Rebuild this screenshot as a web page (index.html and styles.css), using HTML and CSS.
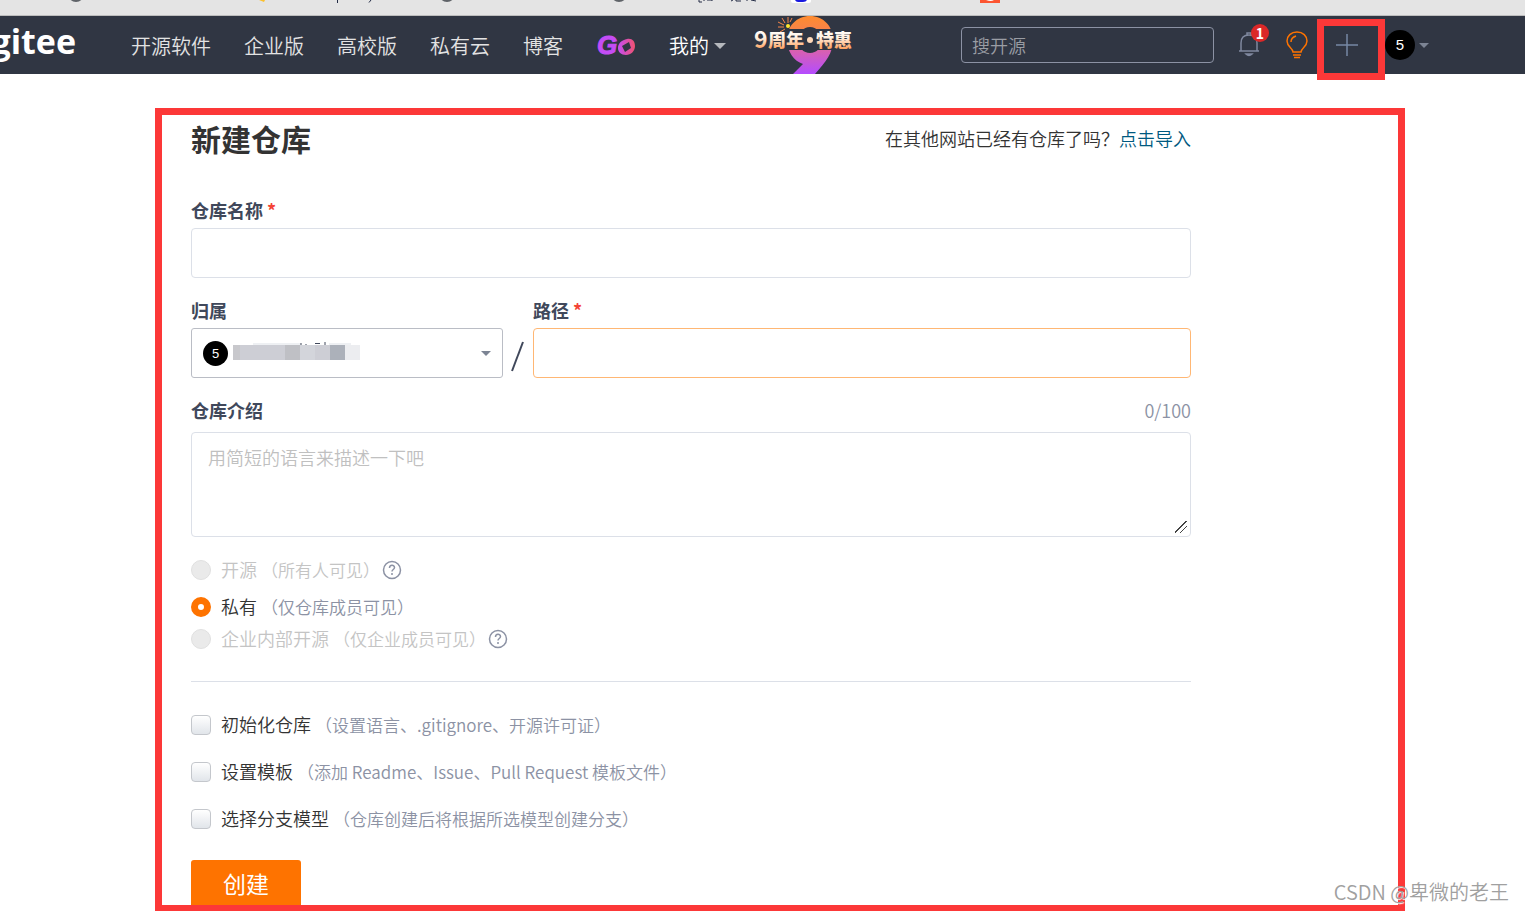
FILE: index.html
```html
<!DOCTYPE html>
<html lang="zh-CN">
<head>
    <meta charset="utf-8">
    <title>新建仓库 - Gitee</title>
    <link rel="stylesheet" href="styles.css">
</head>
<body>
    <div class="browser-bar">
        <svg width="1010" height="15" viewBox="0 0 1010 15">
            <g fill="#5f6368">
                <circle cx="76" cy="-6" r="8"/>
                <circle cx="447" cy="-6" r="8"/>
                <circle cx="619" cy="-6" r="8"/>
            </g>
            <path d="M259 0h6l-1 2z" fill="#fbc02d"/>
            <path d="M337.500 0v3M371 0l-2 2.500M699 0v2h3M704 0v1M707 0h5v1M733 0l-2 1M736 0v1h5M747 0v1M751 0l5 1" fill="none" stroke="#222b45"/>
            <rect x="791" y="-4" width="20" height="7" rx="2" fill="#fff"/>
            <path d="M795 0h12q-1 2-4 2h-5q-2 0-3-2z" fill="#1a1ae0"/>
            <rect x="980" y="0" width="20" height="3" fill="#fc5531"/>
            <path d="M986 0h8q-3 2-8 0z" fill="#fff"/>
        </svg>
    </div>

    <header class="header">
        <a href="#" class="logo">gitee</a>
        <nav class="nav">
            <a href="#">开源软件</a>
            <a href="#">企业版</a>
            <a href="#">高校版</a>
            <a href="#">私有云</a>
            <a href="#">博客</a>
            <a href="#" class="go">
                <svg width="40" height="32" viewBox="0 0 40 32">
                    <defs>
                        <linearGradient id="goFill" x1="0" x2="1">
                            <stop offset="0" stop-color="#c44df5"/>
                            <stop offset="1" stop-color="#f0526e"/>
                        </linearGradient>
                    </defs>
                    <text x="1" y="24" class="go-letter">G</text>
                    <path fill="url(#goFill)" fill-rule="evenodd" d="M31 9c5-1 8 2 8 7 0 5-4 9-9 9s-8-3-8-7c0-5 4-8 9-9zm2 3-7 4 3 6 6-4z"/>
                </svg>
            </a>
            <a href="#" class="mine">我的<span class="caret"></span></a>
        </nav>
        <a href="#" class="promo">
            <svg width="104" height="58" viewBox="0 0 104 58">
                <defs>
                    <linearGradient id="nineFill" x1="0" y1="0" x2="0" y2="58" gradientUnits="userSpaceOnUse">
                        <stop offset="0" stop-color="#ff8c2e"/>
                        <stop offset="0.250" stop-color="#f8824a"/>
                        <stop offset="0.600" stop-color="#d860b0"/>
                        <stop offset="1" stop-color="#b44cff"/>
                    </linearGradient>
                    <linearGradient id="textFill" x1="0" y1="14" x2="0" y2="33" gradientUnits="userSpaceOnUse">
                        <stop offset="0" stop-color="#fff"/>
                        <stop offset="0.400" stop-color="#fff0e0"/>
                        <stop offset="1" stop-color="#ffa05c"/>
                    </linearGradient>
                </defs>
                <path fill="url(#nineFill)" fill-rule="evenodd" d="M56 0c13 0 23 10 23 23 0 15-7 22-18 35H39l10-10c-9-3-16-12-16-25C33 10 43 0 56 0zm0 11a12 13 0 1 0 0 26 12 13 0 1 0 0-26z"/>
                <path fill="#303643" d="M30 13h54v21H30z"/>
                <path fill="none" stroke="#f7864a" d="M34 7V1M31 7l-3-5M30 9l-6-3M30 11h-6M31 13l-5 3M36 6l2-4"/>
                <circle cx="34" cy="10" r="2" fill="#ffe62e"/>
                <text y="32" class="promo-nine">9</text>
                <text x="14" y="31" class="promo-text">周年</text>
                <circle cx="56" cy="24" r="3" fill="#ffd9b8"/>
                <text x="62" y="31" class="promo-text">特惠</text>
            </svg>
        </a>

        <div class="tools">
            <input type="text" class="search" placeholder="搜开源" aria-label="搜开源">
            <a href="#" class="bell" aria-label="通知">
                <svg width="22" height="28" viewBox="0 0 22 28" fill="none" stroke="#7f889f">
                    <path stroke-width="1.500" d="M1 20h20M3 20v-8c0-5 3-8 8-8s8 3 8 8v8M9 4V2h4v2M8 23h6q-3 3-6 0z"/>
                </svg>
                <span class="badge">1</span>
            </a>
            <a href="#" class="bulb" aria-label="提示">
                <svg width="24" height="28" viewBox="0 0 24 28" fill="none" stroke="#fe7300" stroke-width="1.500">
                    <path d="M8 21c0-4-6-5-6-11C2 5 6 1 12 1s10 4 10 9c0 6-6 7-6 11zM8 24h8M9 26.500h6M6 11c0-3 2-5 5-6"/>
                </svg>
            </a>
            <button class="plus" aria-label="新建">
                <svg width="22" height="22" viewBox="0 0 22 22" stroke="#7688a5" stroke-width="1.500">
                    <path d="M0 11h22M11 0v22"/>
                </svg>
            </button>
            <a href="#" class="user"><span class="avatar">5</span><span class="caret small"></span></a>
        </div>
    </header>

    <main class="frame">
        <form class="repo-form">
            <div class="title-row">
                <h1>新建仓库</h1>
                <p>在其他网站已经有仓库了吗？<a href="#">点击导入</a></p>
            </div>

            <div class="field">
                <label for="name">仓库名称 <span class="required">*</span></label>
                <input type="text" id="name">
            </div>

            <div class="path-row">
                <div class="field owner">
                    <label for="owner">归属</label>
                    <div class="select-box">
                        <select id="owner"><option></option></select>
                        <span class="avatar owner-avatar">5</span>
                        <svg class="masked-name" width="128" height="18" viewBox="0 0 128 18">
                            <path fill="#eef0f3" d="M20 1h48v3H20zM96 1h22v3H96z"/>
                            <path stroke="#40485b" d="M68 1v3M73 2v2M82 1.500h5M92 0v4"/>
                            <path fill="#cdced5" d="M0 3h97v15H0z"/>
                            <path fill="#c8c8cc" d="M0 3h7v15H0z"/>
                            <path fill="#bfc0c5" d="M52 3h15v15H52z"/>
                            <path fill="#d3d5db" d="M67 3h15v15H67z"/>
                            <path fill="#acb1ba" d="M97 3h15v15H97z"/>
                            <path fill="#ecedf0" d="M112 3h15v15h-15z"/>
                        </svg>
                        <span class="caret small"></span>
                    </div>
                </div>
                <svg class="slash" width="30" height="50" viewBox="0 0 30 50">
                    <path d="M9 43 20 14" stroke="#40485b" stroke-width="2"/>
                </svg>
                <div class="field path">
                    <label for="path">路径 <span class="required">*</span></label>
                    <input type="text" id="path">
                </div>
            </div>

            <div class="field desc">
                <div class="desc-head">
                    <label for="desc">仓库介绍</label>
                    <span class="count">0/100</span>
                </div>
                <textarea id="desc" placeholder="用简短的语言来描述一下吧"></textarea>
            </div>

            <div class="radios">
                <div class="option disabled">
                    <input type="radio" name="visible" id="public" disabled>
                    <label for="public">开源 <span>（所有人可见）</span></label>
                    <svg class="help" width="20" height="20" viewBox="0 0 20 20" fill="none" stroke="#8c92a4" stroke-width="1.500">
                        <circle cx="10" cy="10" r="8.500"/>
                        <path d="M7.500 8c0-3.500 5-3.500 5-.500 0 2-2.500 2-2.500 4M10 13v2"/>
                    </svg>
                </div>
                <div class="option private">
                    <input type="radio" name="visible" id="private" checked>
                    <label for="private">私有 <span>（仅仓库成员可见）</span></label>
                </div>
                <div class="option disabled">
                    <input type="radio" name="visible" id="inner" disabled>
                    <label for="inner">企业内部开源 <span>（仅企业成员可见）</span></label>
                    <svg class="help" width="20" height="20" viewBox="0 0 20 20" fill="none" stroke="#8c92a4" stroke-width="1.500">
                        <circle cx="10" cy="10" r="8.500"/>
                        <path d="M7.500 8c0-3.500 5-3.500 5-.500 0 2-2.500 2-2.500 4M10 13v2"/>
                    </svg>
                </div>
            </div>

            <div class="checks">
                <div class="option">
                    <input type="checkbox" id="init">
                    <label for="init">初始化仓库 <span>（设置语言、.gitignore、开源许可证）</span></label>
                </div>
                <div class="option">
                    <input type="checkbox" id="template">
                    <label for="template">设置模板 <span>（添加 Readme、Issue、Pull Request 模板文件）</span></label>
                </div>
                <div class="option">
                    <input type="checkbox" id="branch">
                    <label for="branch">选择分支模型 <span>（仓库创建后将根据所选模型创建分支）</span></label>
                </div>
            </div>

            <button type="submit" class="submit">创建</button>
        </form>
    </main>

    <div class="watermark">CSDN @卑微的老王</div>
</body>
</html>
```
FILE: styles.css
```css
* {
    box-sizing: border-box;
}
body {
    margin: 0;
    background: #fff;
    color: #333;
    font-family: "Noto Sans CJK SC", sans-serif;
    font-size: 18px;
    font-weight: 350;
    line-height: 24px;
    position: relative;
}
a {
    color: #005980;
    text-decoration: none;
}
input, select, textarea, button {
    font: inherit;
    margin: 0;
}
svg {
    display: block;
    flex: none;
}

/* browser strip */
.browser-bar {
    height: 16px;
    background: #e4e4e4;
    border-bottom: 1px solid #bdbdbd;
    overflow: hidden;
}

/* header */
.header {
    display: flex;
    align-items: center;
    height: 58px;
    padding-right: 96px;
    background: #303643;
}
.logo {
    display: flex;
    justify-content: flex-end;
    width: 76px;
    height: 58px;
    overflow: hidden;
    color: #fff;
    font-family: "Open Sans", sans-serif;
    font-size: 34px;
    font-weight: 700;
    line-height: 50px;
}
.nav {
    display: flex;
    align-items: center;
    gap: 33px;
    margin-left: 55px;
    padding-top: 2px;
    font-size: 20px;
}
.nav a {
    color: #e3e3e3;
    white-space: nowrap;
}
.nav .mine {
    display: flex;
    align-items: center;
    gap: 5px;
    color: #fff;
}
.caret {
    border: 6px solid transparent;
    border-top-color: #b5b8bd;
    border-bottom: 0;
}
.caret.small {
    border-width: 5px;
    border-bottom: 0;
    border-top-color: #7c8494;
}
.go-letter {
    font: italic 700 26px "Liberation Sans", sans-serif;
    fill: #c44df5;
    stroke: #c44df5;
}
.promo {
    margin-left: 28px;
}
.promo-text {
    font-size: 18px;
    font-weight: 900;
    fill: url(#textFill);
}
.promo-nine {
    font-size: 23px;
    font-weight: 700;
    fill: url(#textFill);
}
.tools {
    display: flex;
    align-items: center;
    margin-left: auto;
}
.search {
    width: 253px;
    height: 36px;
    padding: 0 10px;
    border: 1px solid #8c92a4;
    border-radius: 4px;
    background: transparent;
    color: #fff;
}
.search::placeholder {
    color: #9a9da4;
}
.bell {
    position: relative;
    margin-left: 24px;
}
.badge {
    position: absolute;
    top: -7px;
    right: -9px;
    width: 18px;
    height: 18px;
    border-radius: 50%;
    background: #db2828;
    color: #fff;
    font-size: 14px;
    font-weight: 700;
    line-height: 18px;
    text-align: center;
}
.bulb {
    margin-left: 25px;
}
.plus {
    position: relative;
    display: flex;
    align-items: center;
    justify-content: center;
    width: 68px;
    height: 58px;
    margin-left: 8px;
    padding: 0 8px 0 0;
    border: 0;
    background: none;
}
.plus::after {
    content: "";
    position: absolute;
    inset: 3px 0 -6px;
    border: 7px solid #fc3838;
}
.user {
    display: flex;
    align-items: center;
    gap: 4px;
}
.avatar {
    width: 30px;
    height: 30px;
    border-radius: 50%;
    background: #000;
    color: #fff;
    font-family: "Liberation Sans", sans-serif;
    font-size: 15px;
    font-weight: 400;
    line-height: 30px;
    text-align: center;
}

/* form */
.frame {
    margin: 34px 120px 0 155px;
    padding: 5px 29px 0;
    border: 7px solid #fc3838;
    border-bottom-width: 6px;
}
.repo-form {
    max-width: 1000px;
}
.title-row {
    display: flex;
    justify-content: space-between;
    align-items: center;
    height: 36px;
    margin-bottom: 43px;
}
.title-row h1 {
    margin: 0;
    font-size: 30px;
    font-weight: 700;
    line-height: 36px;
}
.title-row p {
    margin: 0;
}
.field {
    display: flex;
    flex-direction: column;
    gap: 7px;
    margin-bottom: 21px;
}
.field label {
    color: #40485b;
    font-weight: 700;
    line-height: 22px;
}
.required {
    color: #f44336;
}
.field input, .field select, .field textarea {
    width: 100%;
    height: 50px;
    padding: 0 16px;
    border: 1px solid #dce0e8;
    border-radius: 4px;
    background: #fff;
    color: #40485b;
}
.path-row {
    display: flex;
    align-items: flex-start;
}
.owner {
    width: 312px;
}
.slash {
    align-self: flex-end;
    margin-bottom: 21px;
}
.path {
    flex: 1;
}
.field.path input {
    border-color: #ffb774;
}
.select-box {
    position: relative;
}
.field select {
    display: block;
    appearance: none;
    border-color: #babdc5;
    border-radius: 3px;
}
.owner-avatar {
    position: absolute;
    top: 13px;
    left: 12px;
    width: 25px;
    height: 25px;
    font-size: 13px;
    line-height: 25px;
}
.masked-name {
    position: absolute;
    top: 14px;
    left: 42px;
}
.select-box .caret {
    position: absolute;
    top: 23px;
    right: 12px;
}
.field.desc {
    gap: 11px;
    margin-bottom: 17px;
}
.desc-head {
    display: flex;
    justify-content: space-between;
    line-height: 22px;
}
.count {
    color: #8c92a4;
}
.field textarea {
    display: block;
    height: 105px;
    padding: 12px 16px;
    resize: vertical;
}
textarea::placeholder {
    color: #c0c0c0;
}
textarea::-webkit-resizer {
    background: linear-gradient(135deg, transparent 45%, #444 45%, #444 53%, transparent 53%, transparent 67%, #444 67%, #444 75%, transparent 75%) 0 0 / 12px 12px no-repeat;
}

/* options */
.option {
    display: flex;
    align-items: center;
    gap: 10px;
    height: 24px;
}
.option label {
    padding-bottom: 2px;
}
.option span {
    color: #8c92a4;
    font-size: 17px;
}
.option.disabled, .option.disabled span {
    color: #c4c4c4;
}
.option input {
    appearance: none;
    width: 20px;
    height: 20px;
    border: 1px solid #c4c7cc;
    border-radius: 4px;
    background: linear-gradient(#fff, #e1e5ea);
}
.option input[type="radio"] {
    border-color: #e0e0e0;
    border-radius: 50%;
    background: #eaeaea;
}
.option input[type="radio"]:checked {
    border: 7px solid #fe7300;
    background: #fff;
}
.help {
    margin-left: -8px;
}
.radios {
    padding-bottom: 26px;
    border-bottom: 1px solid #dce0e8;
}
.radios .option {
    height: 32px;
}
.radios .private {
    margin-top: 5px;
}
.checks {
    display: flex;
    flex-direction: column;
    gap: 23px;
    margin: 31px 0 29px;
}
.submit {
    display: block;
    width: 110px;
    height: 45px;
    padding: 0;
    border: 0;
    border-radius: 3px 3px 0 0;
    background: #fe7300;
    color: #fff;
    font-size: 23px;
    font-weight: 400;
}

.watermark {
    position: absolute;
    right: 16px;
    bottom: 7px;
    color: #a0a0a0;
    font-size: 20px;
    text-shadow: 1px 1px 1px #fff;
}
```
